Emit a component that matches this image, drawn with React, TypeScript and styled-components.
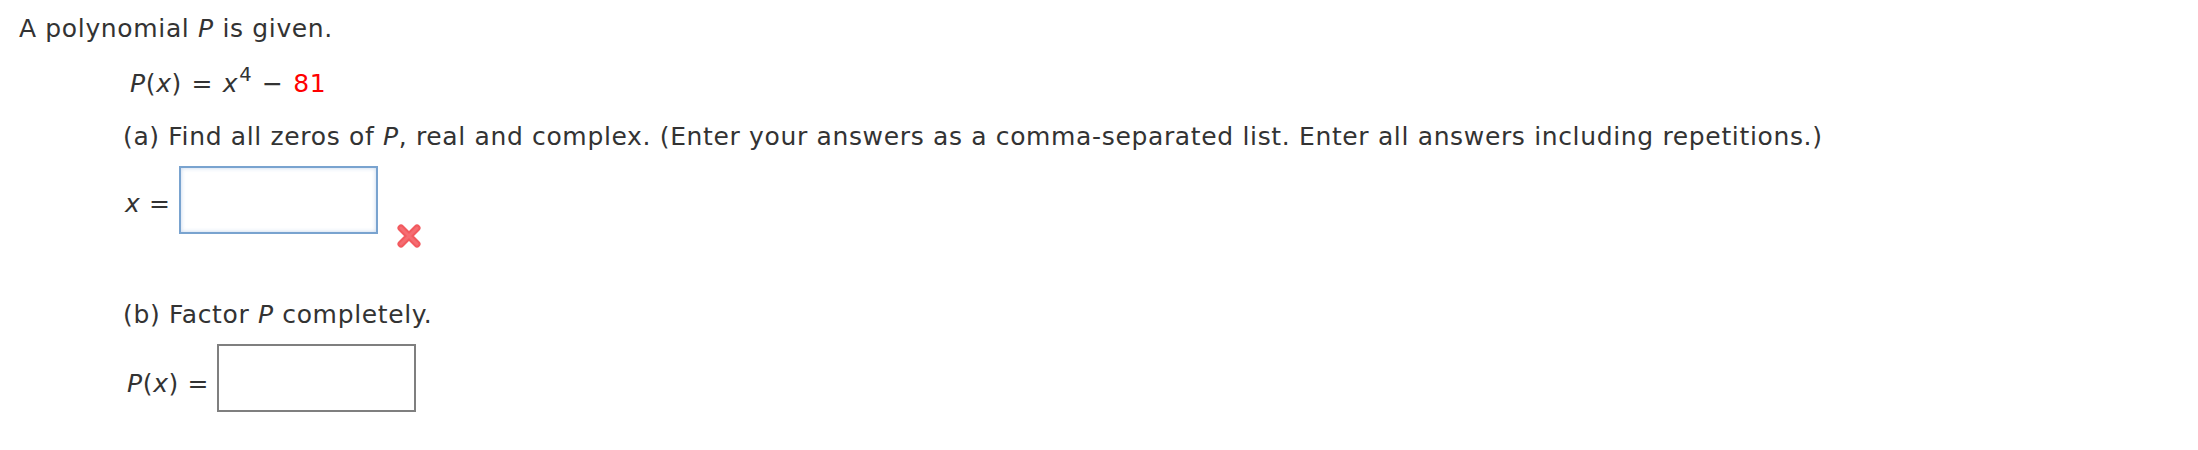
import React from "react";
import styled, { createGlobalStyle } from "styled-components";

const Global = createGlobalStyle`
  html, body { margin: 0; padding: 0; background: #fff; }
  body {
    font-family: "DejaVu Sans", Verdana, sans-serif;
    font-size: 25px;
    letter-spacing: 0.65px;
    color: #333333;
  }
`;

const Page = styled.div`
  display: flex;
  flex-direction: column;
  padding: 12px 0 0 19px;
`;

const Line = styled.div<{ $indent?: number; $top?: number }>`
  line-height: 34px;
  height: 34px;
  white-space: nowrap;
  margin-left: ${(p) => p.$indent ?? 0}px;
  margin-top: ${(p) => p.$top ?? 0}px;
`;

const Var = styled.i`
  font-style: italic;
`;

const Op = styled.span`
  margin: 0 1px;
`;

const Sup = styled.span`
  font-size: 0.78em;
  position: relative;
  top: -0.55em;
  margin-left: 1px;
`;

const Red = styled.span`
  color: #ff0000;
`;

const AnswerRow = styled.div<{ $indent: number; $top: number }>`
  display: flex;
  align-items: center;
  margin-left: ${(p) => p.$indent}px;
  margin-top: ${(p) => p.$top}px;
`;

const Label = styled.span<{ $shift: number }>`
  line-height: 34px;
  padding-top: ${(p) => p.$shift}px;
  margin-right: 8px;
  white-space: nowrap;
`;

const Input = styled.input<{ $focused?: boolean }>`
  box-sizing: border-box;
  width: 199px;
  height: 68px;
  border: 2px solid ${(p) => (p.$focused ? "#79a3cf" : "#7f7f7f")};
  box-shadow: ${(p) => (p.$focused ? "inset 0 0 4px rgba(120,160,210,0.45)" : "none")};
  background: #fff;
  outline: none;
  padding: 0 6px;
  font: inherit;
`;

const WrongIcon = styled.svg`
  align-self: flex-end;
  margin-left: 17px;
  margin-bottom: -15px;
  width: 28px;
  height: 26px;
  filter: blur(0.4px);
`;

export default function App() {
  return (
    <>
      <Global />
      <Page>
        <Line>
          A polynomial <Var>P</Var> is given.
        </Line>
        <Line $indent={111} $top={21}>
          <Var>P</Var>(<Var>x</Var>) <Op>=</Op> <Var>x</Var>
          <Sup>4</Sup> <Op>−</Op> <Red>81</Red>
        </Line>
        <Line $indent={104} $top={19}>
          (a) Find all zeros of <Var>P</Var>, real and complex. (Enter your answers as a comma-separated list. Enter all
          answers including repetitions.)
        </Line>
        <AnswerRow $indent={106} $top={12}>
          <Label $shift={7}>
            <Var>x</Var> =
          </Label>
          <Input $focused type="text" />
          <WrongIcon viewBox="0 0 28 26">
            <path
              d="M6 5 L22 21 M22 5 L6 21"
              stroke="#f25a5f"
              strokeWidth="7"
              strokeLinecap="round"
              fill="none"
            />
            <path
              d="M6 5 L22 21 M22 5 L6 21"
              stroke="#f77a7e"
              strokeWidth="3"
              strokeLinecap="round"
              fill="none"
              opacity="0.6"
            />
          </WrongIcon>
        </AnswerRow>
        <Line $indent={104} $top={64}>
          (b) Factor <Var>P</Var> completely.
        </Line>
        <AnswerRow $indent={108} $top={12}>
          <Label $shift={12}>
            <Var>P</Var>(<Var>x</Var>) =
          </Label>
          <Input type="text" />
        </AnswerRow>
      </Page>
    </>
  );
}
